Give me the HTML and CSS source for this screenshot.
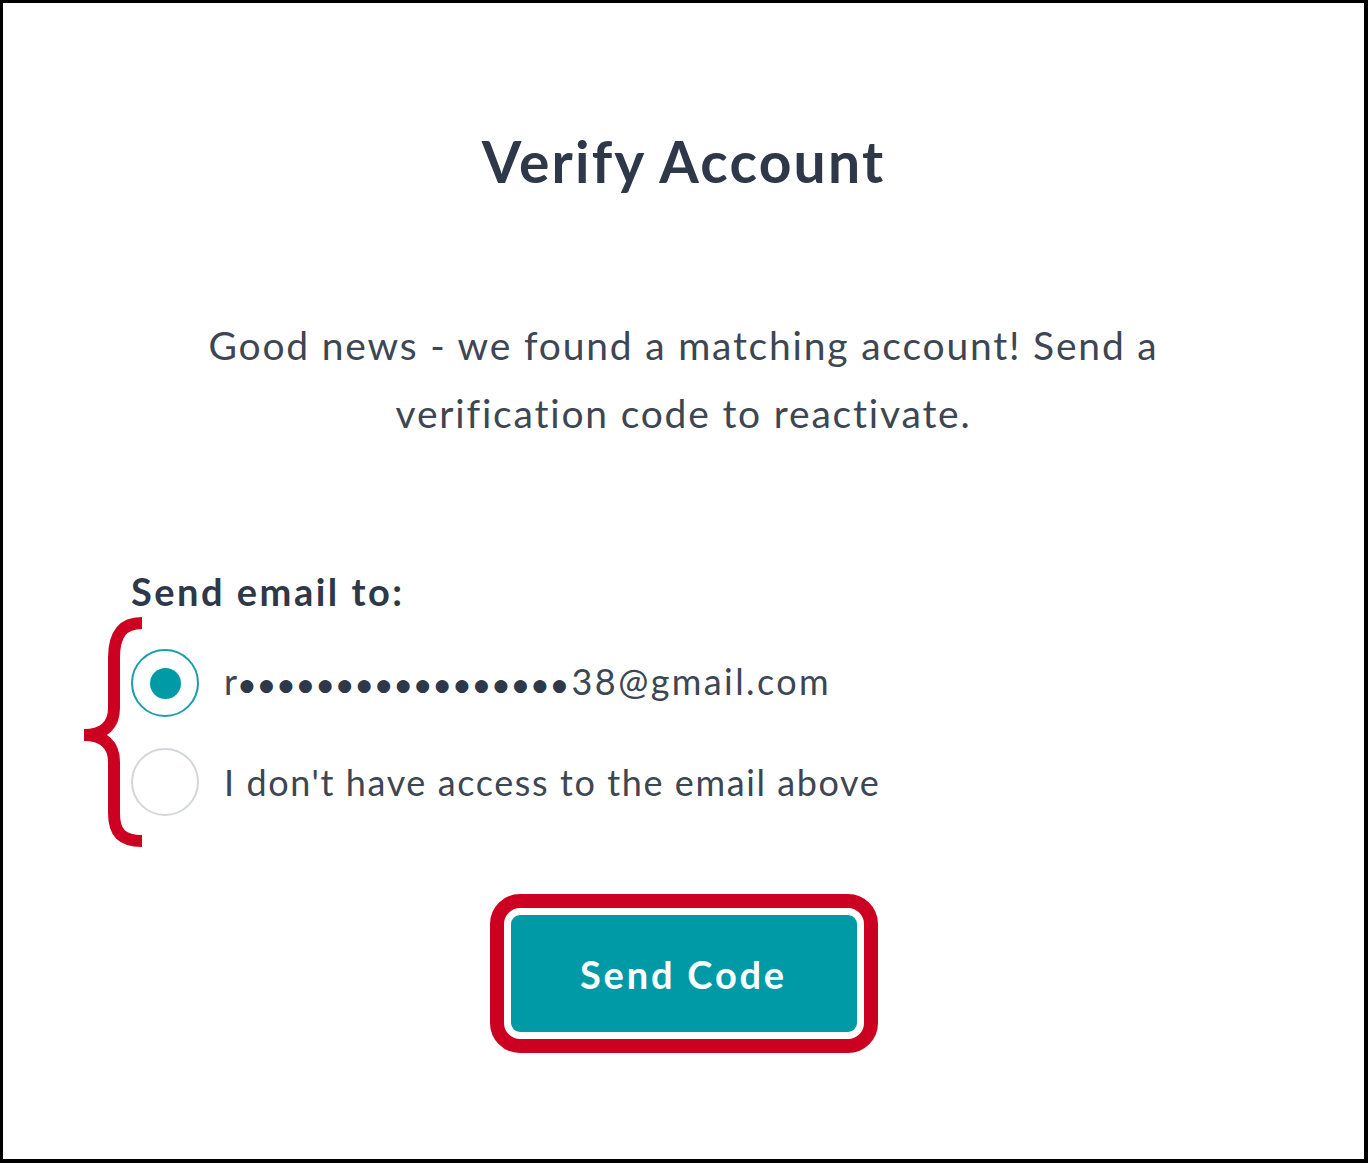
FILE: index.html
```html
<!DOCTYPE html>
<html lang="en">
<head>
<meta charset="utf-8">
<title>Verify Account</title>
<link rel="stylesheet" href="styles.css">
</head>
<body>
<div class="frame">
  <h1 class="title">Verify Account</h1>
  <p class="lead">Good news - we found a matching account! Send a<br>verification code to reactivate.</p>
  <div class="options">
    <div class="label">Send email to:</div>
    <label class="option">
      <span class="radio radio-on"><span class="radio-dot"></span></span>
      <span class="option-text email">r<span class="dots">●●●●●●●●●●●●●●●●●</span>38@gmail.com</span>
    </label>
    <label class="option">
      <span class="radio"></span>
      <span class="option-text">I don't have access to the email above</span>
    </label>
    <svg class="brace" width="70" height="240" viewBox="0 0 70 240" aria-hidden="true">
      <path d="M64,10 C44,10 36,22 36,45 L36,95 C36,112 26,122 6,122 C26,122 36,132 36,149 L36,200 C36,220 44,228 64,228" fill="none" stroke="#cc0020" stroke-width="12" stroke-linecap="butt" stroke-linejoin="bevel"/>
    </svg>
  </div>
  <div class="actions">
    <div class="highlight">
      <button class="btn" type="button">Send Code</button>
    </div>
  </div>
</div>
</body>
</html>
```
FILE: styles.css
```css
html, body {
  margin: 0;
  padding: 0;
  background: #fff;
}
body {
  font-family: Lato, "Noto Sans", sans-serif;
  color: #3d4652;
}
.frame {
  position: relative;
  box-sizing: border-box;
  width: 1368px;
  height: 1163px;
  border: 4px solid #000;
  border-width: 3px 4px 4px 3px;
  padding-top: 124px;
}
.title {
  margin: 0;
  text-align: center;
  font-size: 57px;
  line-height: 68px;
  font-weight: 700;
  color: #2f3848;
  letter-spacing: 2.2px;
}
.lead {
  margin: 116px 0 0;
  text-align: center;
  font-size: 39px;
  line-height: 68px;
  letter-spacing: 1.8px;
  color: #3d4652;
}
.options {
  position: relative;
  margin-top: 120px;
  padding-left: 128px;
}
.label {
  font-size: 38px;
  line-height: 48px;
  font-weight: 700;
  color: #2f3848;
  letter-spacing: 2.5px;
  margin-bottom: 34px;
}
.option {
  display: flex;
  align-items: center;
  gap: 25px;
  height: 68px;
  margin-bottom: 31px;
}
.radio {
  box-sizing: border-box;
  width: 68px;
  height: 68px;
  border-radius: 50%;
  border: 2px solid #d3d7dc;
  display: flex;
  align-items: center;
  justify-content: center;
  flex: none;
}
.radio-on {
  border-color: #1a9ea8;
}
.radio-dot {
  width: 31px;
  height: 31px;
  border-radius: 50%;
  background: #009aa6;
}
.option-text {
  font-size: 36px;
  line-height: 48px;
  letter-spacing: 1.6px;
  color: #3d4652;
}
.email {
  letter-spacing: 2.4px;
}
.dots {
  font-family: "DejaVu Sans", sans-serif;
  font-size: 17px;
  letter-spacing: 4.7px;
  color: #2f3848;
  vertical-align: 4px;
}
.brace {
  position: absolute;
  left: 75px;
  top: 46px;
}
.actions {
  display: flex;
  justify-content: center;
  margin-top: 78px;
}
.highlight {
  border: 14px solid #cc0020;
  border-radius: 30px;
  padding: 7px;
}
.btn {
  display: block;
  width: 346px;
  height: 117px;
  border: 0;
  border-radius: 9px;
  background: #009aa6;
  color: #fff;
  font-family: Lato, "Noto Sans", sans-serif;
  font-size: 38px;
  font-weight: 700;
  letter-spacing: 2.8px;
}
```
